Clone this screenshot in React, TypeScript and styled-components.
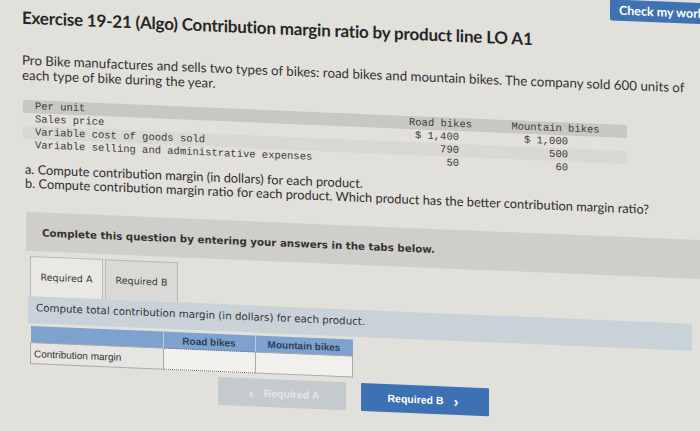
import styled, { createGlobalStyle } from "styled-components";

const GlobalStyle = createGlobalStyle`
    html, body {
        margin: 0;
        padding: 0;
        overflow: hidden;
        background: #e2e0db;
    }
    body {
        font-family: "Lato", "Liberation Sans", sans-serif;
        color: #2a2a2a;
    }
`;

interface Row {
    label: string;
    road: string;
    mountain: string;
}

const rows: Row[] = [
    { label: "Sales price", road: "$ 1,400", mountain: "$ 1,000" },
    { label: "Variable cost of goods sold", road: "790", mountain: "500" },
    { label: "Variable selling and administrative expenses", road: "50", mountain: "60" },
];

function App() {
    return (
        <>
            <GlobalStyle />
            <Page>
                <TopBar>
                    <CheckButton>Check my work</CheckButton>
                </TopBar>

                <Title>Exercise 19-21 (Algo) Contribution margin ratio by product line LO A1</Title>

                <Intro>
                    Pro Bike manufactures and sells two types of bikes: road bikes and mountain bikes. The company sold 600 units of
                    each type of bike during the year.
                </Intro>

                <DataTable>
                    <thead>
                        <tr>
                            <DataHead $align="left">Per unit</DataHead>
                            <DataHead $align="center">Road bikes</DataHead>
                            <DataHead $align="center">Mountain bikes</DataHead>
                        </tr>
                    </thead>
                    <tbody>
                        {rows.map((row, i) => (
                            <DataRow key={row.label} $shaded={i === 1}>
                                <LabelCell>{row.label}</LabelCell>
                                <ValueCell $pad={25}>{row.road}</ValueCell>
                                <ValueCell $pad={59}>{row.mountain}</ValueCell>
                            </DataRow>
                        ))}
                    </tbody>
                </DataTable>

                <Questions>
                    <li>a. Compute contribution margin (in dollars) for each product.</li>
                    <li>b. Compute contribution margin ratio for each product. Which product has the better contribution margin ratio?</li>
                </Questions>

                <Instruction>Complete this question by entering your answers in the tabs below.</Instruction>

                <Tabs>
                    <Tab $active>Required A</Tab>
                    <Tab>Required B</Tab>
                </Tabs>

                <Prompt>Compute total contribution margin (in dollars) for each product.</Prompt>

                <AnswerTable>
                    <thead>
                        <tr>
                            <AnswerHead />
                            <AnswerHead>Road bikes</AnswerHead>
                            <AnswerHead>Mountain bikes</AnswerHead>
                        </tr>
                    </thead>
                    <tbody>
                        <tr>
                            <AnswerLabel>Contribution margin</AnswerLabel>
                            <AnswerInput $focused />
                            <AnswerInput />
                        </tr>
                    </tbody>
                </AnswerTable>

                <NavRow>
                    <NavButton disabled>
                        <Chevron>&lsaquo;</Chevron> Required A
                    </NavButton>
                    <NavButton $primary>
                        Required B <Chevron>&rsaquo;</Chevron>
                    </NavButton>
                </NavRow>
            </Page>
        </>
    );
}

// the reference is a photo of a screen, so the page leans down to the right
const Page = styled.div`
    width: 700px;
    height: 470px;
    transform: skewY(2.4deg);
    transform-origin: 650px 0;
`;

const TopBar = styled.div`
    display: flex;
    justify-content: flex-end;
    height: 22px;
    margin-right: -14px;
`;

const CheckButton = styled.button`
    width: 104px;
    height: 21px;
    margin-top: 1px;
    border: none;
    border-radius: 2px;
    background: #3f71b3;
    color: #fff;
    font-family: "Lato", sans-serif;
    font-weight: 700;
    font-size: 12.5px;
    text-align: left;
    padding: 0 0 0 9px;
`;

const Title = styled.h1`
    margin: 12px 0 0 22px;
    font-size: 17px;
    line-height: 20px;
    font-weight: 700;
    letter-spacing: -0.2px;
    color: #262626;
`;

const Intro = styled.p`
    margin: 25px 0 0 22px;
    width: 668px;
    font-size: 13.3px;
    line-height: 15px;
    color: #333;
`;

const DataTable = styled.table`
    margin: 17px 0 0 23px;
    width: 604px;
    border-collapse: collapse;
    font-family: "Liberation Mono", monospace;
    font-size: 10.5px;
    color: #3a3a3a;

    td, th {
        padding: 0;
        height: 13px;
        line-height: 13px;
        white-space: pre;
    }
`;

const DataHead = styled.th<{ $align: string }>`
    background: #c8c7c4;
    font-weight: 400;
    text-align: ${({ $align }) => $align};
    padding-left: ${({ $align }) => ($align === "left" ? "12px" : "0")} !important;

    &:nth-child(1) { width: 362px; }
    &:nth-child(2) { width: 87px; }
`;

const DataRow = styled.tr<{ $shaded?: boolean }>`
    background: ${({ $shaded }) => ($shaded ? "#d9d8d4" : "transparent")};
`;

const LabelCell = styled.td`
    padding-left: 12px !important;
`;

const ValueCell = styled.td<{ $pad: number }>`
    text-align: right;
    padding-right: ${({ $pad }) => $pad}px !important;
`;

const Questions = styled.ul`
    list-style: none;
    margin: 10px 0 0 25px;
    padding: 0;
    font-size: 12.8px;
    line-height: 14px;
    color: #2e2e2e;
`;

const Instruction = styled.div`
    margin: 22px 0 0 26px;
    height: 39px;
    display: flex;
    align-items: center;
    padding-left: 16px;
    background: #cfceca;
    font-family: "DejaVu Sans", sans-serif;
    font-weight: 700;
    font-size: 10.25px;
    color: #333;
`;

const Tabs = styled.div`
    display: flex;
    gap: 2px;
    margin: 5px 0 0 30px;
`;

const Tab = styled.div<{ $active?: boolean }>`
    width: 73px;
    height: 40px;
    box-sizing: border-box;
    display: flex;
    align-items: center;
    justify-content: center;
    border: 1px solid #b9b8b4;
    border-bottom: none;
    background: ${({ $active }) => ($active ? "#e9e8e4" : "#dad9d5")};
    font-family: "DejaVu Sans", sans-serif;
    font-size: 9.5px;
    color: #3a3a3a;
`;

const Prompt = styled.div`
    margin: 0 8px 0 28px;
    height: 27px;
    box-sizing: border-box;
    padding: 5px 0 0 8px;
    background: #c9d2d9;
    font-family: "DejaVu Sans", sans-serif;
    font-size: 10.3px;
    line-height: 13px;
    color: #333;
`;

const AnswerTable = styled.table`
    margin: 3px 0 0 30px;
    border-collapse: collapse;
    font-family: "Liberation Sans", sans-serif;
    font-size: 10px;
    color: #333;
`;

const AnswerHead = styled.th`
    height: 16px;
    padding: 0;
    background: #7ea2cf;
    color: #2d3f57;
    font-weight: 700;
    border-left: 1px solid #b9c9dc;

    &:nth-child(1) { width: 132px; border-left: none; }
    &:nth-child(2) { width: 91px; }
    &:nth-child(3) { width: 97px; }
`;

const AnswerLabel = styled.td`
    height: 20px;
    padding: 0 0 0 3px;
    background: #e6e5e2;
    border: 1px solid #a9a9a6;
`;

const AnswerInput = styled.td<{ $focused?: boolean }>`
    height: 20px;
    padding: 0;
    background: #f1f0ed;
    border: 1px ${({ $focused }) => ($focused ? "dotted #777" : "solid #a9a9a6")};
`;

const NavRow = styled.div`
    display: flex;
    gap: 15px;
    margin: 5px 0 0 218px;
`;

const NavButton = styled.button<{ $primary?: boolean }>`
    width: 128px;
    height: 28px;
    border: none;
    border-radius: 1px;
    background: ${({ $primary }) => ($primary ? "#3c71b3" : "#c5cacf")};
    color: ${({ $primary }) => ($primary ? "#fff" : "#e4e7ea")};
    font-family: "Liberation Sans", sans-serif;
    font-weight: 700;
    font-size: 10.5px;
    display: flex;
    align-items: center;
    justify-content: center;
    gap: 6px;
`;

const Chevron = styled.span`
    font-size: 15px;
    line-height: 1;
    margin: 0 4px;
`;

export default App;
